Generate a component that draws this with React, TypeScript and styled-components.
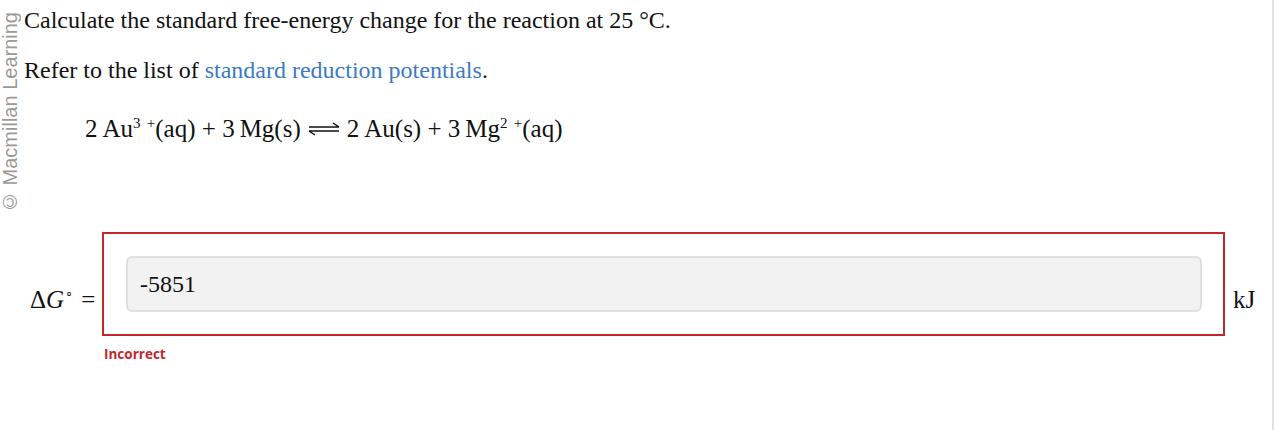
import React from "react";
import styled, { createGlobalStyle } from "styled-components";

const Global = createGlobalStyle`
  html, body { margin: 0; padding: 0; background: #fff; }
  body { font-family: "Liberation Serif", "Times New Roman", serif; color: #111; }
`;

const Page = styled.div`
  width: 1272px;
  height: 430px;
  border-right: 2px solid #e2e2e2;
  display: flex;
  box-sizing: content-box;
`;

const Watermark = styled.div`
  width: 16px;
  flex: none;
  padding-top: 12px;
  display: flex;
  flex-direction: column;
  align-items: flex-start;
`;

const WatermarkText = styled.span`
  writing-mode: vertical-rl;
  transform: rotate(180deg);
  font-family: "Liberation Sans", Arial, sans-serif;
  font-size: 20px;
  color: #9a9a9a;
  line-height: 20px;
  white-space: nowrap;
`;

const Content = styled.div`
  flex: 1;
  padding-left: 8px;
  padding-top: 6px;
  display: flex;
  flex-direction: column;
`;

const Para = styled.p`
  margin: 0 0 22px 0;
  font-size: 24px;
  line-height: 28px;
`;

const Link = styled.a`
  color: #3c7bc4;
  text-decoration: none;
`;

const Equation = styled.div`
  margin: 8px 0 0 61px;
  font-size: 25px;
  line-height: 30px;
  white-space: nowrap;
`;

const Sup = styled.sup`
  font-size: 15px;
  vertical-align: 9px;
  line-height: 0;
`;

const Arrows = styled.svg`
  display: inline-block;
  vertical-align: 1px;
  margin: 0 7px 0 7px;
`;

const AnswerRow = styled.div`
  margin-top: 88px;
  margin-left: 6px;
  display: flex;
  align-items: flex-end;
`;

const Label = styled.span`
  font-size: 25px;
  line-height: 28px;
  margin-bottom: 22px;
  width: 72px;
  flex: none;
  white-space: nowrap;
`;

const Italic = styled.i`
  font-style: italic;
`;

const Deg = styled.sup`
  font-size: 13px;
  vertical-align: 11px;
  line-height: 0;
  margin-left: 1px;
`;

const Eq = styled.span`
  margin-left: 8px;
`;

const AnswerCol = styled.div`
  display: flex;
  flex-direction: column;
`;

const ErrorBox = styled.div`
  width: 1123px;
  box-sizing: border-box;
  border: 2px solid #c0282d;
  padding: 22px 21px 22px 22px;
`;

const Input = styled.div`
  height: 56px;
  box-sizing: border-box;
  background: #f2f2f2;
  border: 2px solid #e0e0e0;
  border-radius: 6px;
  padding: 12px 12px 0;
  font-size: 24px;
  line-height: 28px;
`;

const Unit = styled.span`
  font-size: 25px;
  line-height: 28px;
  margin: 0 0 22px 8px;
`;

const Feedback = styled.div`
  margin-top: 9px;
  margin-left: 80px;
  font-family: "Open Sans", "Liberation Sans", sans-serif;
  font-weight: 700;
  font-size: 13.5px;
  line-height: 18px;
  color: #c0282d;
`;

export default function App() {
  return (
    <>
      <Global />
      <Page>
        <Watermark>
          <WatermarkText>© Macmillan Learning</WatermarkText>
        </Watermark>
        <Content>
          <Para>Calculate the standard free-energy change for the reaction at 25 °C.</Para>
          <Para>
            Refer to the list of <Link href="#">standard reduction potentials</Link>.
          </Para>
          <Equation>
            2&thinsp;Au<Sup>3</Sup>&nbsp;<Sup>+</Sup>(aq) + 3&thinsp;Mg(s)
            <Arrows width="32" height="14" viewBox="0 0 32 14">
              <path d="M1 5 H31 M31 5 L25 1" stroke="#111" strokeWidth="1.5" fill="none" />
              <path d="M1 9 H31 M1 9 L7 13" stroke="#111" strokeWidth="1.5" fill="none" />
            </Arrows>
            2&thinsp;Au(s) + 3&thinsp;Mg<Sup>2</Sup>&nbsp;<Sup>+</Sup>(aq)
          </Equation>
          <AnswerRow>
            <Label>
              Δ<Italic>G</Italic>
              <Deg>∘</Deg>
              <Eq>=</Eq>
            </Label>
            <AnswerCol>
              <ErrorBox>
                <Input>-5851</Input>
              </ErrorBox>
            </AnswerCol>
            <Unit>kJ</Unit>
          </AnswerRow>
          <Feedback>Incorrect</Feedback>
        </Content>
      </Page>
    </>
  );
}
